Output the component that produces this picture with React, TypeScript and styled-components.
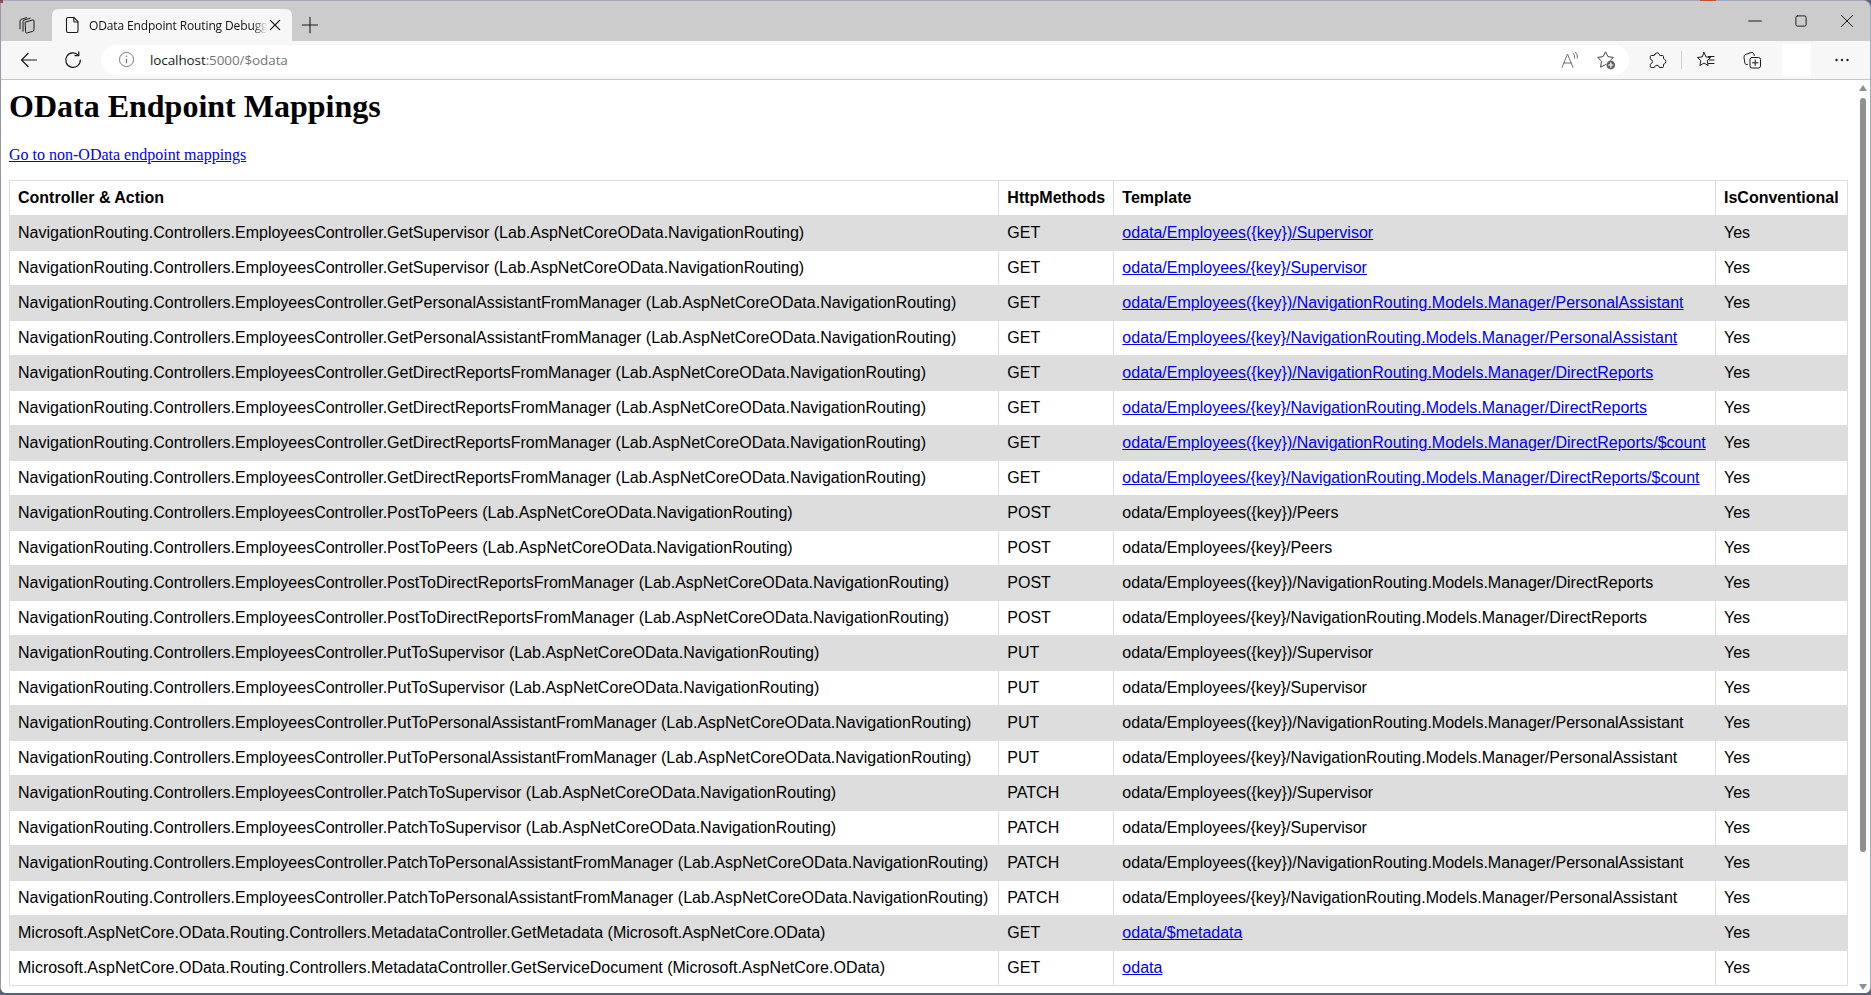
import React from "react";
import styled, { createGlobalStyle } from "styled-components";

const Global = createGlobalStyle`
  html, body { margin: 0; padding: 0; height: 100%; overflow: hidden; background: #59617c; }
  #root { height: 100%; }
`;

const Desktop = styled.div`
  position: relative;
  height: 995px;
  display: flex;
  background: #59617c;
`;

const Peek = styled.span<{ $left: number; $w: number; $h: number; $c: string }>`
  position: absolute;
  top: 0;
  left: ${(p) => p.$left}px;
  width: ${(p) => p.$w}px;
  height: ${(p) => p.$h}px;
  background: ${(p) => p.$c};
  z-index: 2;
`;

const Window = styled.div`
  flex: 1;
  min-width: 0;
  display: flex;
  flex-direction: column;
  height: 993px;
  overflow: hidden;
  background: #fff;
  border-top: 1px solid #a5a9c0;
  border-left: 1px solid #9a9aa2;
  border-right: 1px solid #a5a9c0;
  box-sizing: border-box;
  border-radius: 0 8px 6px 6px;
`;

const TabStrip = styled.div`
  height: 40px;
  flex: none;
  display: flex;
  align-items: flex-end;
  background: #cccccc;
  color: #1a1a1a;
`;

const TabsButton = styled.div`
  width: 51px;
  height: 32px;
  display: flex;
  align-items: center;
  justify-content: center;
  box-sizing: border-box;
`;

const Tab = styled.div`
  width: 240px;
  height: 32px;
  box-sizing: border-box;
  padding: 0 9px 0 10px;
  display: flex;
  align-items: center;
  background: #f7f7f7;
  border-radius: 6px 6px 0 0;
`;

const TabTitle = styled.span`
  flex: 1;
  min-width: 0;
  margin-left: 7px;
  overflow: hidden;
  white-space: nowrap;
  font: 12px "Open Sans", "Noto Sans", sans-serif;
  letter-spacing: -0.12px;
  color: #111;
  -webkit-mask-image: linear-gradient(to right, #000 92%, transparent 100%);
  mask-image: linear-gradient(to right, #000 92%, transparent 100%);
`;

const NewTab = styled.div`
  width: 36px;
  height: 32px;
  display: flex;
  align-items: center;
  justify-content: center;
`;

const StripFill = styled.div`
  flex: 1;
`;

const WindowButton = styled.div`
  width: 46px;
  height: 40px;
  display: flex;
  align-items: center;
  justify-content: center;
`;

const Toolbar = styled.div`
  height: 39px;
  flex: none;
  box-sizing: border-box;
  display: flex;
  align-items: center;
  background: #f7f7f7;
  border-bottom: 1px solid #c6c6c6;
  padding-bottom: 1px;
  color: #1a1a1a;
`;

const ToolButton = styled.div<{ $w: number }>`
  width: ${(p) => p.$w}px;
  height: 32px;
  flex: none;
  display: flex;
  align-items: center;
  justify-content: center;
`;

const AddressBar = styled.div`
  flex: none;
  width: 1528px;
  height: 30px;
  margin: 0 4px 0 12px;
  box-sizing: border-box;
  display: flex;
  align-items: center;
  background: #fff;
  border-radius: 15px;
  padding: 0 5px 0 17px;
`;

const Url = styled.div`
  flex: 1;
  margin-left: 15px;
  font: 13.5px "Open Sans", "Noto Sans", sans-serif;
  letter-spacing: -0.1px;
  color: #767676;
  white-space: nowrap;
`;

const UrlHost = styled.span`
  color: #1a1a1a;
`;

const Separator = styled.div`
  width: 1px;
  height: 18px;
  flex: none;
  background: #cfcfcf;
`;

const ProfileSlot = styled.div`
  width: 29px;
  height: 32px;
  margin-left: 8px;
  flex: none;
  background: #fff;
`;

const PageRow = styled.div`
  flex: 1;
  min-height: 0;
  display: flex;
`;

const Page = styled.main`
  flex: 1;
  min-width: 0;
  padding: 8px;
  box-sizing: border-box;
  overflow: hidden;
  background: #fff;
  color: #000;
  font: 16px "Liberation Serif", "Times New Roman", serif;
`;

const Heading = styled.h1`
  margin: 0 0 21.44px;
  font: bold 32px "Liberation Serif", "Times New Roman", serif;
`;

const NavLine = styled.p`
  margin: 0 0 16px;
`;

const Link = styled.a`
  color: #0000ee;
  text-decoration: underline;
`;

const Table = styled.table`
  width: 100%;
  border-collapse: collapse;
  font: 16px "Liberation Sans", Arial, sans-serif;
`;

const Row = styled.tr`
  &:nth-child(even) {
    background: #dddddd;
  }
`;

const HeadCell = styled.th`
  border: 1px solid #dddddd;
  padding: 8px;
  text-align: left;
  font-weight: bold;
  white-space: nowrap;
`;

const Cell = styled.td`
  border: 1px solid #dddddd;
  padding: 8px;
  text-align: left;
  white-space: nowrap;
`;

const Scrollbar = styled.div`
  width: 14px;
  flex: none;
  display: flex;
  flex-direction: column;
  align-items: center;
  background: #fdfdfd;
  padding: 5px 0 3px;
  box-sizing: border-box;
`;

const ArrowUp = styled.div`
  width: 0;
  height: 0;
  border-left: 4px solid transparent;
  border-right: 4px solid transparent;
  border-bottom: 6px solid #8b919c;
  flex: none;
`;

const ArrowDown = styled(ArrowUp)`
  border-bottom: 0;
  border-top: 6px solid #8b919c;
`;

const Track = styled.div`
  flex: 1;
  width: 100%;
  padding-top: 7px;
  box-sizing: border-box;
  display: flex;
  justify-content: center;
`;

const Thumb = styled.div`
  width: 6px;
  height: 754px;
  border-radius: 3px;
  background: #8f8f8f;
`;

const Base = ({ size = 20, children }: { size?: number; children: React.ReactNode }) => (
  <svg width={size} height={size} viewBox="0 0 20 20" fill="none" stroke="currentColor" strokeWidth="1" strokeLinecap="round" strokeLinejoin="round">
    {children}
  </svg>
);

const TabsIcon = () => (
  <Base>
    <path d="M8.5 7l7-2a1.2 1.2 0 0 1 1.5 1.2v8.6a1.6 1.6 0 0 1-1.2 1.5l-5.6 1.6a1.2 1.2 0 0 1-1.7-1.2z" />
    <path d="M6 16.2V6.5a1.6 1.6 0 0 1 1.2-1.5l6-1.8" />
    <path d="M3 13.8V6a1.6 1.6 0 0 1 1.1-1.5l5.4-1.9" />
  </Base>
);

const FileIcon = () => (
  <Base>
    <path d="M5 2.5h5.8L15 6.7v9.3a1.5 1.5 0 0 1-1.5 1.5h-8.5A1.5 1.5 0 0 1 3.5 16V4A1.5 1.5 0 0 1 5 2.5z" transform="translate(1 0)" strokeWidth="1.1" />
    <path d="M11.8 2.7V6a1 1 0 0 0 1 1h3" strokeWidth="1.1" />
  </Base>
);

const CloseSmall = () => (
  <Base size={16}>
    <path d="M4.2 4.2l11.6 11.6M15.8 4.2L4.2 15.8" strokeWidth="1.7" />
  </Base>
);

const Plus = () => (
  <Base size={18}>
    <path d="M10 1.5v17M1.5 10h17" strokeWidth="1.2" />
  </Base>
);

const Minimize = () => (
  <Base size={14}>
    <path d="M1 10h18" strokeWidth="1.5" />
  </Base>
);

const Maximize = () => (
  <Base size={12}>
    <rect x="1.5" y="1.5" width="17" height="17" rx="2.5" strokeWidth="1.6" />
  </Base>
);

const CloseIcon = () => (
  <Base size={14}>
    <path d="M2 2l16 16M18 2L2 18" strokeWidth="1.4" />
  </Base>
);

const Back = () => (
  <Base>
    <path d="M2.5 10h15M9 3.5L2.5 10 9 16.5" strokeWidth="1.2" />
  </Base>
);

const Refresh = () => (
  <Base>
    <path d="M15.4 5.2A7.3 7.3 0 1 0 17.3 10" strokeWidth="1.2" />
    <path d="M15.8 1.8v3.8H12" strokeWidth="1.2" />
  </Base>
);

const Info = () => (
  <svg width="17" height="17" viewBox="0 0 20 20" fill="none" stroke="#6f6f6f" strokeWidth="1.1">
    <circle cx="10" cy="10" r="8.3" />
    <path d="M10 9v5.5" strokeWidth="1.4" />
    <circle cx="10" cy="6.3" r="0.9" fill="#6f6f6f" stroke="none" />
  </svg>
);

const ReadAloud = () => (
  <svg width="20" height="20" viewBox="0 0 20 20" fill="none" stroke="#6f6f6f" strokeWidth="1" strokeLinecap="round" strokeLinejoin="round">
    <path d="M2 17.5L7.5 4l5.5 13.5M3.8 13h7.4" />
    <path d="M12.8 3a5 5 0 0 1 1.9 5M15.3 2a7 7 0 0 1 2.2 6.2" />
  </svg>
);

const FavAdd = () => (
  <svg width="20" height="20" viewBox="0 0 20 20" fill="none" stroke="#444" strokeWidth="1" strokeLinecap="round" strokeLinejoin="round">
    <path d="M14.5 10.2l2.8-2.8-5.3-.7-2.5-4.9-2.5 4.9-5.3.7 3.8 3.8-.9 6 4.9-2.6" />
    <circle cx="14.8" cy="15" r="4.4" fill="#616161" stroke="none" />
    <path d="M14.8 12.8v4.4M12.6 15h4.4" stroke="#fff" strokeWidth="1.2" />
  </svg>
);

const Extensions = () => (
  <Base>
    <path d="M7.8 4.6C7.6 2.4 12.4 2.2 12.3 4.5c0 .7.3 1 .9 1h2.3c.6 0 1 .4 1 1v1.9c0 .6.4.9 1 .9 1.8.2 1.8 4.4-.2 4.5-.5 0-.8.4-.8.9v1.8c0 .6-.4 1-1 1h-2.7c-.6 0-.9-.4-.9-.9 0-1.8-3.9-1.8-4 0 0 .5-.4.9-.9.9H4.3c-.6 0-1-.4-1-1v-1.9c0-.6.3-.9.8-1 1.8-.3 1.8-3.7 0-4-.5-.1-.8-.4-.8-1V6.500c0-.6.4-1 1-1h2.600c.5 0 .9-.3.900-.900z" />
  </Base>
);

const Favorites = () => (
  <Base>
    <path d="M8 2.5l2 4.4 4.600.6-3.400 3.200.900 4.800L8 13l-4.100 2.500.900-4.800L1.400 7.500 6 6.900z" />
    <path d="M12.500 6.500h5.500M13 10h5M12.500 13.500h5.500" />
  </Base>
);

const Collections = () => (
  <Base>
    <rect x="8" y="7.500" width="10.500" height="10.500" rx="2" />
    <path d="M13.200 10v5.500M10.500 12.800H16" />
    <path d="M5.500 14.500a2 2 0 0 1-2.600-1.300L2 7.500a3 3 0 0 1 2-3.200l5-1.700c1.300-.4 2.400.2 2.900 1.400l.4 1.600" />
  </Base>
);

const More = () => (
  <svg width="20" height="20" viewBox="0 0 20 20" fill="#222">
    <circle cx="4.500" cy="10" r="1.200" />
    <circle cx="10" cy="10" r="1.200" />
    <circle cx="15.500" cy="10" r="1.200" />
  </svg>
);

const NR = "NavigationRouting.Controllers.EmployeesController.";
const LAB = " (Lab.AspNetCoreOData.NavigationRouting)";
const MGR = "/NavigationRouting.Models.Manager/";

type Item = { action: string; method: string; template: string; link?: boolean };

const pair = (name: string, method: string, suffix: string, link?: boolean): Item[] => [
  { action: NR + name + LAB, method, template: `odata/Employees({key})${suffix}`, link },
  { action: NR + name + LAB, method, template: `odata/Employees/{key}${suffix}`, link },
];

const items: Item[] = [
  ...pair("GetSupervisor", "GET", "/Supervisor", true),
  ...pair("GetPersonalAssistantFromManager", "GET", MGR + "PersonalAssistant", true),
  ...pair("GetDirectReportsFromManager", "GET", MGR + "DirectReports", true),
  ...pair("GetDirectReportsFromManager", "GET", MGR + "DirectReports/$count", true),
  ...pair("PostToPeers", "POST", "/Peers"),
  ...pair("PostToDirectReportsFromManager", "POST", MGR + "DirectReports"),
  ...pair("PutToSupervisor", "PUT", "/Supervisor"),
  ...pair("PutToPersonalAssistantFromManager", "PUT", MGR + "PersonalAssistant"),
  ...pair("PatchToSupervisor", "PATCH", "/Supervisor"),
  ...pair("PatchToPersonalAssistantFromManager", "PATCH", MGR + "PersonalAssistant"),
  {
    action: "Microsoft.AspNetCore.OData.Routing.Controllers.MetadataController.GetMetadata (Microsoft.AspNetCore.OData)",
    method: "GET",
    template: "odata/$metadata",
    link: true,
  },
  {
    action: "Microsoft.AspNetCore.OData.Routing.Controllers.MetadataController.GetServiceDocument (Microsoft.AspNetCore.OData)",
    method: "GET",
    template: "odata",
    link: true,
  },
];

export default function App() {
  return (
    <Desktop>
      <Global />
      <Peek $left={1700} $w={16} $h={1} $c="#c4512d" />
      <Peek $left={0} $w={3} $h={3} $c="#8a4a55" />
      <Window>
        <TabStrip>
          <TabsButton>
            <TabsIcon />
          </TabsButton>
          <Tab>
            <FileIcon />
            <TabTitle>OData Endpoint Routing Debugger</TabTitle>
            <CloseSmall />
          </Tab>
          <NewTab>
            <Plus />
          </NewTab>
          <StripFill />
          <WindowButton>
            <Minimize />
          </WindowButton>
          <WindowButton>
            <Maximize />
          </WindowButton>
          <WindowButton>
            <CloseIcon />
          </WindowButton>
        </TabStrip>
        <Toolbar>
          <ToolButton $w={56}>
            <Back />
          </ToolButton>
          <ToolButton $w={32}>
            <Refresh />
          </ToolButton>
          <AddressBar>
            <Info />
            <Url>
              <UrlHost>localhost</UrlHost>:5000/$odata
            </Url>
            <ToolButton $w={36}>
              <ReadAloud />
            </ToolButton>
            <ToolButton $w={36}>
              <FavAdd />
            </ToolButton>
          </AddressBar>
          <ToolButton $w={48}>
            <Extensions />
          </ToolButton>
          <Separator />
          <ToolButton $w={48}>
            <Favorites />
          </ToolButton>
          <ToolButton $w={44}>
            <Collections />
          </ToolButton>
          <ProfileSlot />
          <ToolButton $w={62}>
            <More />
          </ToolButton>
        </Toolbar>
        <PageRow>
          <Page>
            <Heading>OData Endpoint Mappings</Heading>
            <NavLine>
              <Link href="#">Go to non-OData endpoint mappings</Link>
            </NavLine>
            <Table>
              <tbody>
                <Row>
                  <HeadCell>Controller &amp; Action</HeadCell>
                  <HeadCell>HttpMethods</HeadCell>
                  <HeadCell>Template</HeadCell>
                  <HeadCell>IsConventional</HeadCell>
                </Row>
                {items.map((it, i) => (
                  <Row key={i}>
                    <Cell>{it.action}</Cell>
                    <Cell>{it.method}</Cell>
                    <Cell>{it.link ? <Link href="#">{it.template}</Link> : it.template}</Cell>
                    <Cell>Yes</Cell>
                  </Row>
                ))}
              </tbody>
            </Table>
          </Page>
          <Scrollbar>
            <ArrowUp />
            <Track>
              <Thumb />
            </Track>
            <ArrowDown />
          </Scrollbar>
        </PageRow>
      </Window>
    </Desktop>
  );
}
